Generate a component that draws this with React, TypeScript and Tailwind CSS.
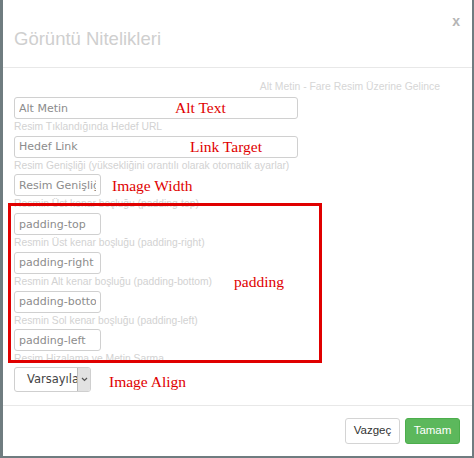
const help = "text-[10.3px] leading-[12.7px] text-[#d2d2d2] mt-[2px] mb-[2px] whitespace-nowrap";
const input =
  "h-[22px] rounded-[3px] border border-[#d0d0d0] bg-white px-[4px] font-['DejaVu_Sans',Verdana,sans-serif] text-[11px] text-[#888] outline-none placeholder:text-[#8c8c8c]";
const anno = "font-['Liberation_Serif',serif] text-[15.5px] text-[#e00000] leading-none whitespace-nowrap";

export default function App() {
  return (
    <div className="w-[474px] h-[458px] bg-[#6f7c80] flex font-['Liberation_Sans',Arial,sans-serif]">
      <div className="ml-[3px] w-[469px] h-[456px] bg-white flex flex-col">
        {/* Header */}
        <div className="relative shrink-0 h-[68px] border-b border-[#e8e8e8] px-[11px] pt-[30px]">
          <h3 className="text-[18.5px] leading-none text-[#cfcfcf]">Görüntü Nitelikleri</h3>
          <button className="absolute right-[12px] top-[11px] text-[14px] font-bold text-[#b5b5b5]">x</button>
        </div>

        {/* Body */}
        <div className="relative flex-1 px-[11px] pt-[12px]">
          <div className="text-right pr-[21px] text-[10.4px] leading-[14px] text-[#d6d6d6] mb-[3px] whitespace-nowrap">
            Alt Metin - Fare Resim Üzerine Gelince
          </div>

          <div className="relative w-[284px]">
            <input className={`${input} w-full block`} placeholder="Alt Metin" />
            <span className={`${anno} absolute left-[161px] top-[3px]`}>Alt Text</span>
          </div>
          <div className={help}>Resim Tıklandığında Hedef URL</div>

          <div className="relative w-[284px]">
            <input className={`${input} w-full block`} placeholder="Hedef Link" />
            <span className={`${anno} absolute left-[176px] top-[3px]`}>Link Target</span>
          </div>
          <div className={help}>Resim Genişliği (yüksekliğini orantılı olarak otomatik ayarlar)</div>

          <div className="flex items-center gap-[11px]">
            <input className={`${input} w-[87px]`} placeholder="Resim Genişliği" />
            <span className={`${anno} pt-[1px]`}>Image Width</span>
          </div>

          <div className="relative">
            <div className={help}>Resmin Üst kenar boşluğu (padding-top)</div>
            <input className={`${input} w-[87px] block`} placeholder="padding-top" />
            <div className={help}>Resmin Üst kenar boşluğu (padding-right)</div>
            <input className={`${input} w-[87px] block`} placeholder="padding-right" />
            <div className={help}>Resmin Alt kenar boşluğu (padding-bottom)</div>
            <input className={`${input} w-[87px] block`} placeholder="padding-bottom" />
            <div className={help}>Resmin Sol kenar boşluğu (padding-left)</div>
            <input className={`${input} w-[87px] block`} placeholder="padding-left" />
            <div className={help}>Resim Hizalama ve Metin Sarma</div>

            {/* annotation box */}
            <div className="pointer-events-none absolute left-[-6px] top-[5px] w-[314px] h-[160px] border-[3px] border-[#e00000]" />
            <span className={`${anno} absolute left-[220px] top-[76px]`}>padding</span>
          </div>

          <div className="flex items-center gap-[18px] mt-[-1px]">
            <div className="flex h-[25px] w-[77px] rounded-[3px] border border-[#cfcfcf] overflow-hidden">
              <span className="flex-1 pl-[12px] font-['DejaVu_Sans',Verdana,sans-serif] text-[11.5px] leading-[23px] text-[#444] overflow-hidden whitespace-nowrap">
                Varsayılan
              </span>
              <span className="w-[13px] shrink-0 bg-[#e2e2e2] border-l border-[#bdbdbd] flex items-center justify-center">
                <svg width="7" height="5" viewBox="0 0 7 5">
                  <path d="M1 1l2.5 2.5L6 1" fill="none" stroke="#555" strokeWidth="1.2" />
                </svg>
              </span>
            </div>
            <span className={`${anno} pt-[5px]`}>Image Align</span>
          </div>
        </div>

        {/* Footer */}
        <div className="shrink-0 h-[51px] border-t border-[#e8e8e8] flex items-start justify-end gap-[5px] pr-[12px] pt-[12px]">
          <button className="h-[26px] w-[55px] rounded-[3px] border border-[#d4d4d4] bg-white text-[11.5px] text-[#333]">
            Vazgeç
          </button>
          <button className="h-[26px] w-[55px] rounded-[3px] border border-[#4cae4c] bg-[#5cb85c] text-[11.5px] text-white">
            Tamam
          </button>
        </div>
      </div>
    </div>
  );
}
